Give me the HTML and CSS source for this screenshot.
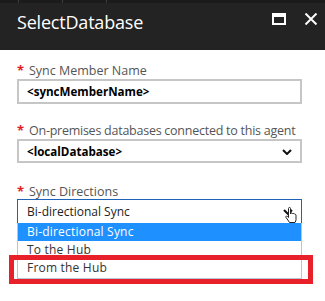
FILE: index.html
```html
<!DOCTYPE html>
<html>
<head>
<meta charset="utf-8">
<link rel="stylesheet" href="styles.css">
</head>
<body>
<div class="page">
  <div class="topstrip"><span class="seg s1"></span><span class="seg s2"></span><span class="seg s3"></span><span class="seg s4"></span></div>
  <div class="header">
    <div class="title">SelectDatabase</div>
    <div class="controls">
      <svg class="ico" width="14" height="12" viewBox="0 0 14 12"><rect x="1" y="1" width="12" height="10" fill="none" stroke="#fff" stroke-width="2"/><rect x="1" y="1" width="12" height="3" fill="#fff"/></svg>
      <svg class="ico" width="14" height="12" viewBox="0 0 14 12"><path d="M1.5 0.5 L12.5 11.5 M12.5 0.5 L1.5 11.5" stroke="#fff" stroke-width="2"/></svg>
    </div>
  </div>
  <div class="form">
    <div class="field f1">
      <div class="label"><span class="star">*</span><span>Sync Member Name</span></div>
      <div class="box"><span class="val bold">&lt;syncMemberName&gt;</span></div>
    </div>
    <div class="field f2">
      <div class="label"><span class="star">*</span><span class="long">On-premises databases connected to this agent</span></div>
      <div class="box"><span class="val bold">&lt;localDatabase&gt;</span>
        <svg class="chev" width="10" height="6" viewBox="0 0 10 6"><path d="M1 1 L5 5 L9 1" fill="none" stroke="#111" stroke-width="2"/></svg>
      </div>
    </div>
    <div class="field f3">
      <div class="label"><span class="star">*</span><span>Sync Directions</span></div>
      <div class="box active"><span class="val">Bi-directional Sync</span>
        <svg class="chev" width="10" height="6" viewBox="0 0 10 6"><path d="M1 1 L5 5 L9 1" fill="none" stroke="#111" stroke-width="2"/></svg>
        <svg class="hand" width="12" height="17" viewBox="0 0 12 17"><path d="M3.5 1.5 Q3.5 0.5 4.5 0.5 Q5.5 0.5 5.5 1.5 L5.5 7 L6 6 Q7 5.5 7.5 6.5 L8 6.5 Q9 6 9.5 7 Q10.5 7 11 8 L11 12.5 Q11 14 10 15.5 L4.5 15.5 Q3 13 1 10.5 Q0.5 9.5 1.5 9 Q2.5 9 3.5 10.5 Z" fill="#fff" stroke="#222" stroke-width="1"/></svg>
      </div>
      <div class="list">
        <div class="opt sel">Bi-directional Sync</div>
        <div class="opt">To the Hub</div>
        <div class="opt last">From the Hub</div>
        <div class="redbox"></div>
      </div>
    </div>
  </div>
</div>
</body>
</html>
```
FILE: styles.css
```css
* { box-sizing: border-box; }
html, body { margin: 0; padding: 0; background: #fff; }
body { width: 325px; height: 301px; overflow: hidden; font-family: "Open Sans", "Noto Sans", sans-serif; }
.page { width: 325px; height: 301px; }
.topstrip { height: 3px; background: #1b1b1b; display: flex; }
.seg { height: 3px; border-right: 1px solid #3a3a3a; }
.s1 { width: 19px; }
.s2 { width: 44px; }
.s3 { width: 44px; }
.s4 { flex: 1; border-right: none; }
.header { height: 47px; background: #232323; display: flex; align-items: center; justify-content: space-between; padding: 0 7px 0 17px; }
.title { color: #fff; font-size: 18px; letter-spacing: -0.2px; margin-top: -10px; }
.controls { display: flex; gap: 18px; margin-top: -16px; }
.ico { display: block; }
.form { padding: 13px 23px 0 17px; }
.field { position: relative; }
.label { display: flex; align-items: flex-start; height: 15px; font-size: 12.5px; color: #555; line-height: 15px; white-space: nowrap; }
.long { letter-spacing: -0.25px; }
.star { color: #e51c23; width: 12px; font-size: 13px; font-weight: bold; line-height: 14px; flex: none; }
.box { position: relative; height: 25px; border: 2px solid #c6c6c6; display: flex; align-items: center; padding-left: 8px; margin-top: 1px; }
.val { font-size: 12px; color: #111; }
.bold { font-weight: bold; color: #000; font-size: 11.6px; }
.f2 { margin-top: 19px; }
.f2 .box { height: 24px; margin-top: 1px; }
.chev { position: absolute; right: 8px; top: 8px; }
.f3 { margin-top: 21px; }
.f3 .box { height: 24px; margin-top: 0; }
.box.active { border: 1px solid #1e63b8; border-bottom: none; padding-left: 9px; }
.box.active .val { color: #222; }
.box.active .chev { right: 8px; top: 9px; }
.hand { position: absolute; right: 4px; top: 7px; }
.list { position: relative; border: 1px solid #b8c4d8; border-top: none; }
.opt { height: 18px; line-height: 18px; padding-left: 9px; font-size: 12px; color: #333; letter-spacing: 0.2px; }
.opt.sel { background: #1e90ff; color: #fff; }
.opt.last { height: 19px; }
.redbox { position: absolute; left: -9px; right: -12px; top: 32px; height: 29px; border: 5px solid #e8202a; }
```
